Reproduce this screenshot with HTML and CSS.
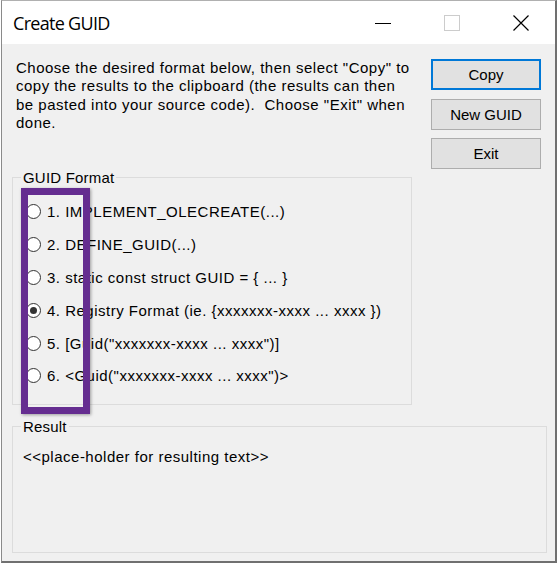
FILE: index.html
```html
<!DOCTYPE html>
<html>
<head>
<meta charset="utf-8">
<link rel="stylesheet" href="styles.css">
</head>
<body>
<div class="window">
  <div class="titlebar">
    <span class="title">Create GUID</span>
    <div class="controls">
      <span class="ctl"><svg width="16" height="16" viewBox="0 0 16 16"><line x1="0" y1="8.5" x2="16" y2="8.5" stroke="#000" stroke-width="1"/></svg></span>
      <span class="ctl"><svg width="16" height="16" viewBox="0 0 16 16"><rect x="0.5" y="0.5" width="15" height="15" fill="none" stroke="#cccccc" stroke-width="1"/></svg></span>
      <span class="ctl"><svg width="16" height="16" viewBox="0 0 16 16"><path d="M0.5 0.5 L15.5 15.5 M15.5 0.5 L0.5 15.5" stroke="#000" stroke-width="1.2" fill="none"/></svg></span>
    </div>
  </div>
  <div class="body">
    <div class="top">
      <p class="desc">Choose the desired format below, then select "Copy" to<br>copy the results to the clipboard (the results can then<br>be pasted into your source code).&nbsp; Choose "Exit" when<br>done.</p>
      <div class="buttons">
        <button class="btn default">Copy</button>
        <button class="btn">New GUID</button>
        <button class="btn">Exit</button>
      </div>
    </div>
    <fieldset class="group format">
      <legend>GUID Format</legend>
      <div class="radios">
        <div class="radio"><span class="circle"></span><span>1. IMPLEMENT_OLECREATE(...)</span></div>
        <div class="radio"><span class="circle"></span><span>2. DEFINE_GUID(...)</span></div>
        <div class="radio"><span class="circle"></span><span>3. static const struct GUID = { ... }</span></div>
        <div class="radio"><span class="circle checked"></span><span>4. Registry Format (ie. {xxxxxxx-xxxx ... xxxx })</span></div>
        <div class="radio"><span class="circle"></span><span>5. [Guid("xxxxxxx-xxxx ... xxxx")]</span></div>
        <div class="radio"><span class="circle"></span><span>6. &lt;Guid("xxxxxxx-xxxx ... xxxx")&gt;</span></div>
      </div>
    </fieldset>
    <fieldset class="group result">
      <legend>Result</legend>
      <p class="result-text">&lt;&lt;place-holder for resulting text&gt;&gt;</p>
    </fieldset>
  </div>
  <div class="highlight"></div>
</div>
</body>
</html>
```

FILE: styles.css
```css
html, body {
  margin: 0;
  padding: 0;
  background: #ffffff;
}
.window {
  position: relative;
  box-sizing: border-box;
  margin-left: 1px;
  width: 556px;
  height: 563px;
  border-left: 1px solid #8a8a8a;
  border-top: 1px solid #b0b0b0;
  border-right: 2px solid #707070;
  border-bottom: 2px solid #707070;
  display: flex;
  flex-direction: column;
  font-family: "Liberation Sans", Arial, sans-serif;
  font-size: 15px;
  color: #000;
}
.titlebar {
  height: 43px;
  background: #ffffff;
  display: flex;
  align-items: center;
  justify-content: space-between;
  flex-shrink: 0;
}
.title {
  font-family: "Open Sans", sans-serif;
  font-size: 18px;
  letter-spacing: -0.7px;
  padding-left: 11px;
  color: #000;
}
.controls {
  display: flex;
  height: 43px;
}
.ctl {
  width: 69px;
  display: flex;
  align-items: center;
  justify-content: center;
}
.ctl svg {
  display: block;
}
.body {
  flex: 1;
  background: #f0f0f0;
  padding: 15px 0 0 10px;
}
.top {
  display: flex;
  align-items: flex-start;
}
.desc {
  margin: 0;
  width: 415px;
  padding-left: 4px;
  line-height: 18.33px;
  white-space: nowrap;
  letter-spacing: 0.5px;
}
.buttons {
  display: flex;
  flex-direction: column;
  gap: 8.5px;
}
.btn {
  box-sizing: border-box;
  width: 110px;
  height: 31px;
  background: #e1e1e1;
  border: 1px solid #adadad;
  font-family: "Liberation Sans", Arial, sans-serif;
  font-size: 15px;
  color: #000;
  padding: 0;
  margin: 0;
}
.btn.default {
  border: 1px solid #0078d7;
  box-shadow: inset 0 0 0 1px #0078d7;
}
.group {
  box-sizing: border-box;
  margin: 0;
  border: 1px solid #dcdcdc;
  padding: 9px 0 0 8px;
}
.group legend {
  padding: 0 2px;
  font-size: 15px;
  line-height: normal;
  letter-spacing: 0.2px;
}
.format {
  width: 400px;
  height: 236px;
}
.radios {
  margin-left: 5px;
}
.radio {
  height: 32.9px;
  display: flex;
  align-items: center;
  gap: 6px;
  white-space: nowrap;
  letter-spacing: 0.5px;
}
.circle {
  box-sizing: border-box;
  width: 15px;
  height: 15px;
  border: 1px solid #333333;
  border-radius: 50%;
  background: #ffffff;
  display: flex;
  align-items: center;
  justify-content: center;
  flex-shrink: 0;
}
.circle.checked::after {
  content: "";
  width: 7px;
  height: 7px;
  border-radius: 50%;
  background: #333333;
}
.result {
  margin-top: 13px;
  width: 535px;
  height: 135px;
  padding-top: 13px;
}
.result-text {
  margin: 0;
  padding-left: 2px;
  letter-spacing: 0.5px;
}
.highlight {
  position: absolute;
  left: 18.7px;
  top: 186.7px;
  width: 69.3px;
  height: 226.3px;
  box-sizing: border-box;
  border: 7.3px solid #652d90;
  box-shadow: 1px 1px 3px rgba(0, 0, 0, 0.35);
  pointer-events: none;
}
```
